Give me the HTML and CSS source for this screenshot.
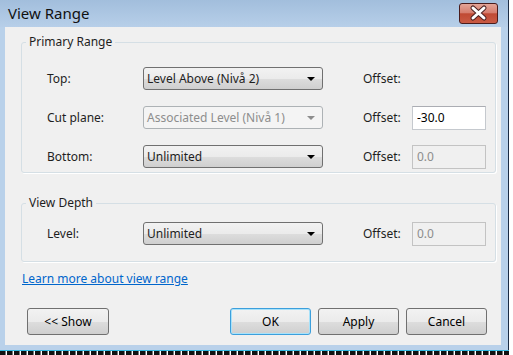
FILE: index.html
```html
<!DOCTYPE html>
<html lang="en">
<head>
    <meta charset="UTF-8">
    <title>View Range</title>
    <link rel="stylesheet" href="styles.css">
</head>
<body>

    <div class="window">
        <div class="titlebar">
            <span class="title">View Range</span>
            <button class="close">
                <svg width="39" height="21" viewBox="0 0 39 21">
                    <path d="M14 5 L25 15 M25 5 L14 15" stroke="#4a2020" stroke-width="5" stroke-linecap="round"/>
                    <path d="M14 5 L25 15 M25 5 L14 15" stroke="#fff" stroke-width="3" stroke-linecap="round"/>
                </svg>
            </button>
        </div>

        <div class="client">
            <fieldset class="group primary">
                <legend>Primary Range</legend>
                <div class="rows">
                    <div class="row">
                        <span class="label">Top:</span>
                        <div class="combo">Level Above (Nivå 2)<span class="arrow"></span></div>
                        <span class="offset">Offset:</span>
                        <span class="no-input"></span>
                    </div>
                    <div class="row">
                        <span class="label">Cut plane:</span>
                        <div class="combo disabled">Associated Level (Nivå 1)<span class="arrow"></span></div>
                        <span class="offset">Offset:</span>
                        <input class="field" type="text" value="-30.0">
                    </div>
                    <div class="row">
                        <span class="label">Bottom:</span>
                        <div class="combo">Unlimited<span class="arrow"></span></div>
                        <span class="offset">Offset:</span>
                        <input class="field" type="text" value="0.0" disabled>
                    </div>
                </div>
            </fieldset>

            <fieldset class="group depth">
                <legend>View Depth</legend>
                <div class="rows">
                    <div class="row">
                        <span class="label">Level:</span>
                        <div class="combo">Unlimited<span class="arrow"></span></div>
                        <span class="offset">Offset:</span>
                        <input class="field" type="text" value="0.0" disabled>
                    </div>
                </div>
            </fieldset>

            <a class="link" href="#">Learn more about view range</a>

            <div class="buttons">
                <button class="btn show">&lt;&lt; Show</button>
                <button class="btn ok">OK</button>
                <button class="btn">Apply</button>
                <button class="btn">Cancel</button>
            </div>
        </div>
    </div>

    <div class="screen-edge"></div>

</body>
</html>
```

FILE: styles.css
```css
body {
    margin: 0;
    width: 513px;
    height: 355px;
    overflow: hidden;
    background-color: #fff;
    font-family: "Segoe UI", "Noto Sans", sans-serif;
    font-size: 12px;
    color: #1e1e1e;
}

.window {
    width: 508px;
    height: 350px;
    border-right: 1px solid #1c2c44;
    background-color: #b9d1ea;
    display: flex;
    flex-direction: column;
}

.titlebar {
    height: 27px;
    flex: none;
    display: flex;
    justify-content: space-between;
    align-items: flex-start;
    padding: 0 10px 0 8px;
    background: linear-gradient(#a2bedc, #b7cfe9);
}

.title {
    font-size: 15px;
    line-height: 27px;
    color: #111;
}

.close {
    margin-top: 3px;
    width: 39px;
    height: 21px;
    padding: 0;
    border: 1px solid #4a1c1c;
    border-radius: 3px;
    background: linear-gradient(#e4a598 0%, #d67e6f 45%, #c04a34 52%, #c95a44 100%);
    display: flex;
}

.close svg {
    margin: -1px;
}

.client {
    height: 318px;
    margin: 0 7px 0 5px;
    padding: 0 5px 0 16px;
    background-color: #f0f0f0;
    display: flex;
    flex-direction: column;
}

.group {
    margin: 7px 0 0 0;
    padding: 0;
    border: 1px solid #d5dfe5;
    border-radius: 3px;
    box-shadow: 1px 1px 0 #fff;
}

.group legend {
    margin-left: 4px;
    padding: 0 3px;
    font-size: 12px;
    line-height: 16px;
}

.primary .rows {
    padding: 17px 0 4px 25px;
}

.depth {
    margin-top: 22px;
}

.depth .rows {
    padding: 11px 0 16px 25px;
}

.rows {
    display: flex;
    flex-direction: column;
    gap: 16px;
}

.row {
    display: flex;
    align-items: center;
    height: 23px;
}

.label {
    width: 96px;
}

.combo {
    width: 180px;
    height: 23px;
    box-sizing: border-box;
    padding-left: 3px;
    line-height: 21px;
    border: 1px solid #707070;
    border-radius: 3px;
    background: linear-gradient(#f2f2f2 0%, #ebebeb 50%, #dddddd 51%, #cfcfcf 100%);
    display: flex;
    align-items: center;
    justify-content: space-between;
}

.arrow {
    margin-right: 7px;
    width: 0;
    height: 0;
    border-left: 4px solid transparent;
    border-right: 4px solid transparent;
    border-top: 4px solid #000;
}

.combo.disabled {
    color: #8d8d8d;
    border-color: #adb2b5;
    background: #f4f4f4;
}

.combo.disabled .arrow {
    border-top-color: #8d8d8d;
}

.offset {
    margin-left: 40px;
    width: 49px;
}

.field {
    width: 74px;
    height: 24px;
    box-sizing: border-box;
    margin: 0;
    padding: 0 0 0 4px;
    border: 1px solid #c5c9ce;
    border-top-color: #abadb3;
    background-color: #fff;
    font-family: inherit;
    font-size: 12px;
    color: #000;
}

.field:disabled {
    background-color: #f0f0f0;
    border-color: #c3c3c3;
    color: #8d8d8d;
}

.link {
    margin: 9px 0 0 1px;
    align-self: flex-start;
    line-height: 16px;
    color: #0066cc;
}

.buttons {
    margin-top: 21px;
    display: flex;
    gap: 7px;
    padding: 0 9px 0 6px;
}

.btn {
    width: 81px;
    height: 27px;
    padding: 0;
    border: 1px solid #707070;
    border-radius: 3px;
    background: linear-gradient(#f2f2f2 0%, #ebebeb 50%, #dddddd 51%, #cfcfcf 100%);
    font-family: inherit;
    font-size: 12px;
    color: #000;
}

.show {
    width: 82px;
    margin-right: auto;
}

.ok {
    border-color: #3c9fdc;
    box-shadow: inset 0 0 0 1px #a8e2fa;
}

.screen-edge {
    width: 509px;
    height: 5px;
    border-top: 1px solid #2fb8e0;
    background: repeating-linear-gradient(90deg, #111 0 5px, #777 5px 6px, #fff 6px 7px);
}
```
